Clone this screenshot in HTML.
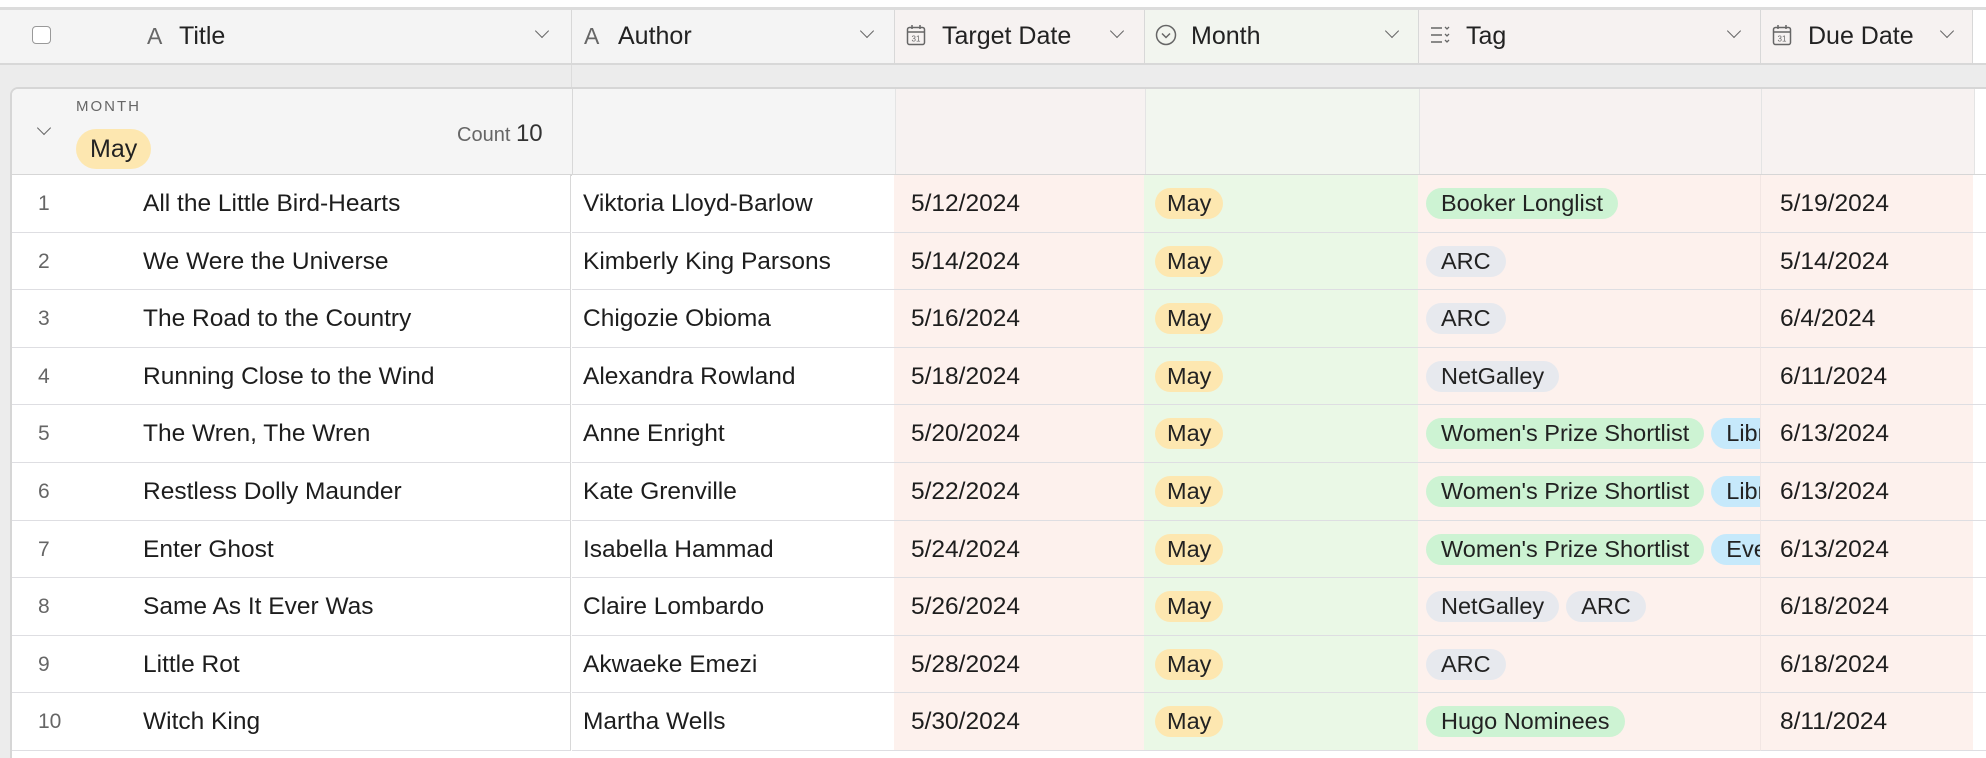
<!DOCTYPE html>
<html style="overflow:hidden;width:1986px;height:758px"><head><meta charset="utf-8"><style>
*{margin:0;padding:0;box-sizing:border-box}
body{width:1986px;height:758px;overflow:hidden;background:#fff;font-family:"Liberation Sans",Arial,sans-serif;color:#1d1d1d;position:relative}
.a{position:absolute}
.hd{position:absolute;top:10px;line-height:53px;font-size:25px;color:#222}
.cell{position:absolute;height:57.6px;border-bottom:1.5px solid #dedee2;font-size:24.5px;line-height:57px;white-space:nowrap;overflow:hidden}
.pill{display:inline-block;height:31px;line-height:31px;border-radius:16px;padding:0 15px;font-size:23.5px;color:#222;vertical-align:middle;margin-right:7px;position:relative;top:-1px}
.y{background:#fde7b0}.g{background:#cdf3d3}.gr{background:#e7e9ee}.b{background:#c6e9fb}
.chev{position:absolute;top:22px;width:10px;height:10px;border-right:1.5px solid #666;border-bottom:1.5px solid #666;transform:rotate(45deg)}
</style></head><body>
<div class="a" style="left:0;top:7px;width:1986px;height:3px;background:#dcdcdc"></div>
<div class="a" style="left:0;top:10px;width:571px;height:53px;background:#f4f4f4"></div>
<div class="a" style="left:571px;top:10px;width:323px;height:53px;background:#f4f4f4;border-left:1px solid #d8d8d8"></div>
<div class="a" style="left:894px;top:10px;width:250px;height:53px;background:#f6f2f1;border-left:1px solid #d8d8d8"></div>
<div class="a" style="left:1144px;top:10px;width:274px;height:53px;background:#f2f5ef;border-left:1px solid #d8d8d8"></div>
<div class="a" style="left:1418px;top:10px;width:342px;height:53px;background:#f6f2f1;border-left:1px solid #d8d8d8"></div>
<div class="a" style="left:1760px;top:10px;width:213px;height:53px;background:#f6f2f1;border-left:1px solid #d8d8d8;border-right:1px solid #d8d8d8"></div>
<div class="a" style="left:0;top:63px;width:1986px;height:2px;background:#d8d8d8"></div>
<div class="a" style="left:32px;top:26px;width:19px;height:18px;border:1.5px solid #999;border-radius:4px;background:#fff"></div>
<div class="hd" style="left:147px;color:#666;font-size:23px">A</div>
<div class="hd" style="left:179px">Title</div>
<div class="chev" style="left:537px;top:26px"></div>
<div class="hd" style="left:584px;color:#666;font-size:23px">A</div>
<div class="hd" style="left:618px">Author</div>
<div class="chev" style="left:862px;top:26px"></div>
<svg class="a" style="left:906px;top:24px" width="20" height="22" viewBox="0 0 20 22"><rect x="1.5" y="3.5" width="17" height="17" rx="2" fill="none" stroke="#666" stroke-width="1.5"/><line x1="1.5" y1="8" x2="18.5" y2="8" stroke="#666" stroke-width="1.5"/><line x1="6" y1="1" x2="6" y2="5" stroke="#666" stroke-width="1.5"/><line x1="14" y1="1" x2="14" y2="5" stroke="#666" stroke-width="1.5"/><text x="10" y="17.5" font-size="8" text-anchor="middle" fill="#666" font-family="Liberation Sans">31</text></svg>
<div class="hd" style="left:942px">Target Date</div>
<div class="chev" style="left:1112px;top:26px"></div>
<svg class="a" style="left:1155px;top:24px" width="22" height="22"><circle cx="11" cy="11" r="9.5" fill="none" stroke="#666" stroke-width="1.5"/><path d="M7 9.5l4 4 4-4" fill="none" stroke="#666" stroke-width="1.5"/></svg>
<div class="hd" style="left:1191px">Month</div>
<div class="chev" style="left:1387px;top:26px"></div>
<svg class="a" style="left:1430px;top:26px" width="22" height="18"><path d="M1 2h11M1 9h11M1 16h11" stroke="#666" stroke-width="1.5"/><path d="M15 1l2 2 2-2M15 8l2 2 2-2M15 14l2 2 2-2" fill="none" stroke="#666" stroke-width="1.3"/></svg>
<div class="hd" style="left:1466px">Tag</div>
<div class="chev" style="left:1729px;top:26px"></div>
<svg class="a" style="left:1772px;top:24px" width="20" height="22" viewBox="0 0 20 22"><rect x="1.5" y="3.5" width="17" height="17" rx="2" fill="none" stroke="#666" stroke-width="1.5"/><line x1="1.5" y1="8" x2="18.5" y2="8" stroke="#666" stroke-width="1.5"/><line x1="6" y1="1" x2="6" y2="5" stroke="#666" stroke-width="1.5"/><line x1="14" y1="1" x2="14" y2="5" stroke="#666" stroke-width="1.5"/><text x="10" y="17.5" font-size="8" text-anchor="middle" fill="#666" font-family="Liberation Sans">31</text></svg>
<div class="hd" style="left:1808px">Due Date</div>
<div class="chev" style="left:1942px;top:26px"></div>
<div class="a" style="left:0;top:65px;width:1986px;height:693px;background:#ececec"></div>
<div class="a" style="left:571px;top:65px;width:1px;height:23px;background:#dcdcdc"></div>
<div class="a" style="left:10px;top:87px;width:1976px;height:671px;background:#fff;border-left:2px solid #d6d6d6;border-top:2px solid #d6d6d6;border-top-left-radius:8px;overflow:hidden">
 <div class="a" style="left:0;top:0;width:561px;height:86px;background:#f5f5f5;border-right:1px solid #d8d8d8"></div>
 <div class="a" style="left:561px;top:0;width:323px;height:86px;background:#f5f5f5;border-right:1px solid #e4e4e4"></div>
 <div class="a" style="left:884px;top:0;width:250px;height:86px;background:#f7f2f1;border-right:1px solid #e4e4e4"></div>
 <div class="a" style="left:1134px;top:0;width:274px;height:86px;background:#f2f6ef;border-right:1px solid #e4e4e4"></div>
 <div class="a" style="left:1408px;top:0;width:342px;height:86px;background:#f7f2f1;border-right:1px solid #e4e4e4"></div>
 <div class="a" style="left:1750px;top:0;width:213px;height:86px;background:#f7f2f1;border-right:1px solid #e4e4e4"></div>
 <div class="a" style="left:0;top:85px;width:1976px;height:1.5px;background:#d6d6d6"></div>
 <div class="a" style="left:64px;top:9px;font-size:15px;letter-spacing:2px;color:#666">MONTH</div>
 <div class="chev" style="left:27px;top:34px"></div>
 <div class="a pill y" style="left:64px;top:40px;height:40px;line-height:40px;border-radius:20px;font-size:25px;padding:0 14px">May</div>
 <div class="a" style="left:445px;top:30px;line-height:30px;font-size:20px;color:#666">Count <span style="font-size:24px;color:#333">10</span></div>
</div>
<div id="rows"></div>
<script>
var d=[["All the Little Bird-Hearts","Viktoria Lloyd-Barlow","5/12/2024",[["Booker Longlist","g"]],"5/19/2024"],
["We Were the Universe","Kimberly King Parsons","5/14/2024",[["ARC","gr"]],"5/14/2024"],
["The Road to the Country","Chigozie Obioma","5/16/2024",[["ARC","gr"]],"6/4/2024"],
["Running Close to the Wind","Alexandra Rowland","5/18/2024",[["NetGalley","gr"]],"6/11/2024"],
["The Wren, The Wren","Anne Enright","5/20/2024",[["Women's Prize Shortlist","g"],["Library","b"]],"6/13/2024"],
["Restless Dolly Maunder","Kate Grenville","5/22/2024",[["Women's Prize Shortlist","g"],["Library","b"]],"6/13/2024"],
["Enter Ghost","Isabella Hammad","5/24/2024",[["Women's Prize Shortlist","g"],["Everand","b"]],"6/13/2024"],
["Same As It Ever Was","Claire Lombardo","5/26/2024",[["NetGalley","gr"],["ARC","gr"]],"6/18/2024"],
["Little Rot","Akwaeke Emezi","5/28/2024",[["ARC","gr"]],"6/18/2024"],
["Witch King","Martha Wells","5/30/2024",[["Hugo Nominees","g"]],"8/11/2024"]];
var h="";
for(var i=0;i<d.length;i++){var t=175+i*57.6,r=d[i];
h+='<div class="cell" style="left:12px;top:'+t+'px;width:559px;border-right:1px solid #d8d8d8;background:#fff"><span class="a" style="left:26px;color:#666;font-size:21px">'+(i+1)+'</span><span class="a" style="left:131px">'+r[0]+'</span></div>';
h+='<div class="cell" style="left:572px;top:'+t+'px;width:322px;background:#fff;padding-left:11px">'+r[1]+'</div>';
h+='<div class="cell" style="left:894px;top:'+t+'px;width:250px;background:#fdf1ed;padding-left:17px">'+r[2]+'</div>';
h+='<div class="cell" style="left:1144px;top:'+t+'px;width:274px;background:#eaf8e6;padding-left:11px"><span class="pill y" style="padding:0 12px">May</span></div>';
var p="";for(var j=0;j<r[3].length;j++)p+='<span class="pill '+r[3][j][1]+'">'+r[3][j][0]+'</span>';
h+='<div class="cell" style="left:1418px;top:'+t+'px;width:342px;background:#fdf1ed;padding-left:8px">'+p+'</div>';
h+='<div class="cell" style="left:1760px;top:'+t+'px;width:213px;background:#fdf1ed;border-left:1px solid #f2e6e3;padding-left:19px">'+r[4]+'</div>';
h+='<div class="cell" style="left:1973px;top:'+t+'px;width:13px;background:#fff"></div>';}
document.getElementById("rows").innerHTML=h;
</script>
</body></html>
